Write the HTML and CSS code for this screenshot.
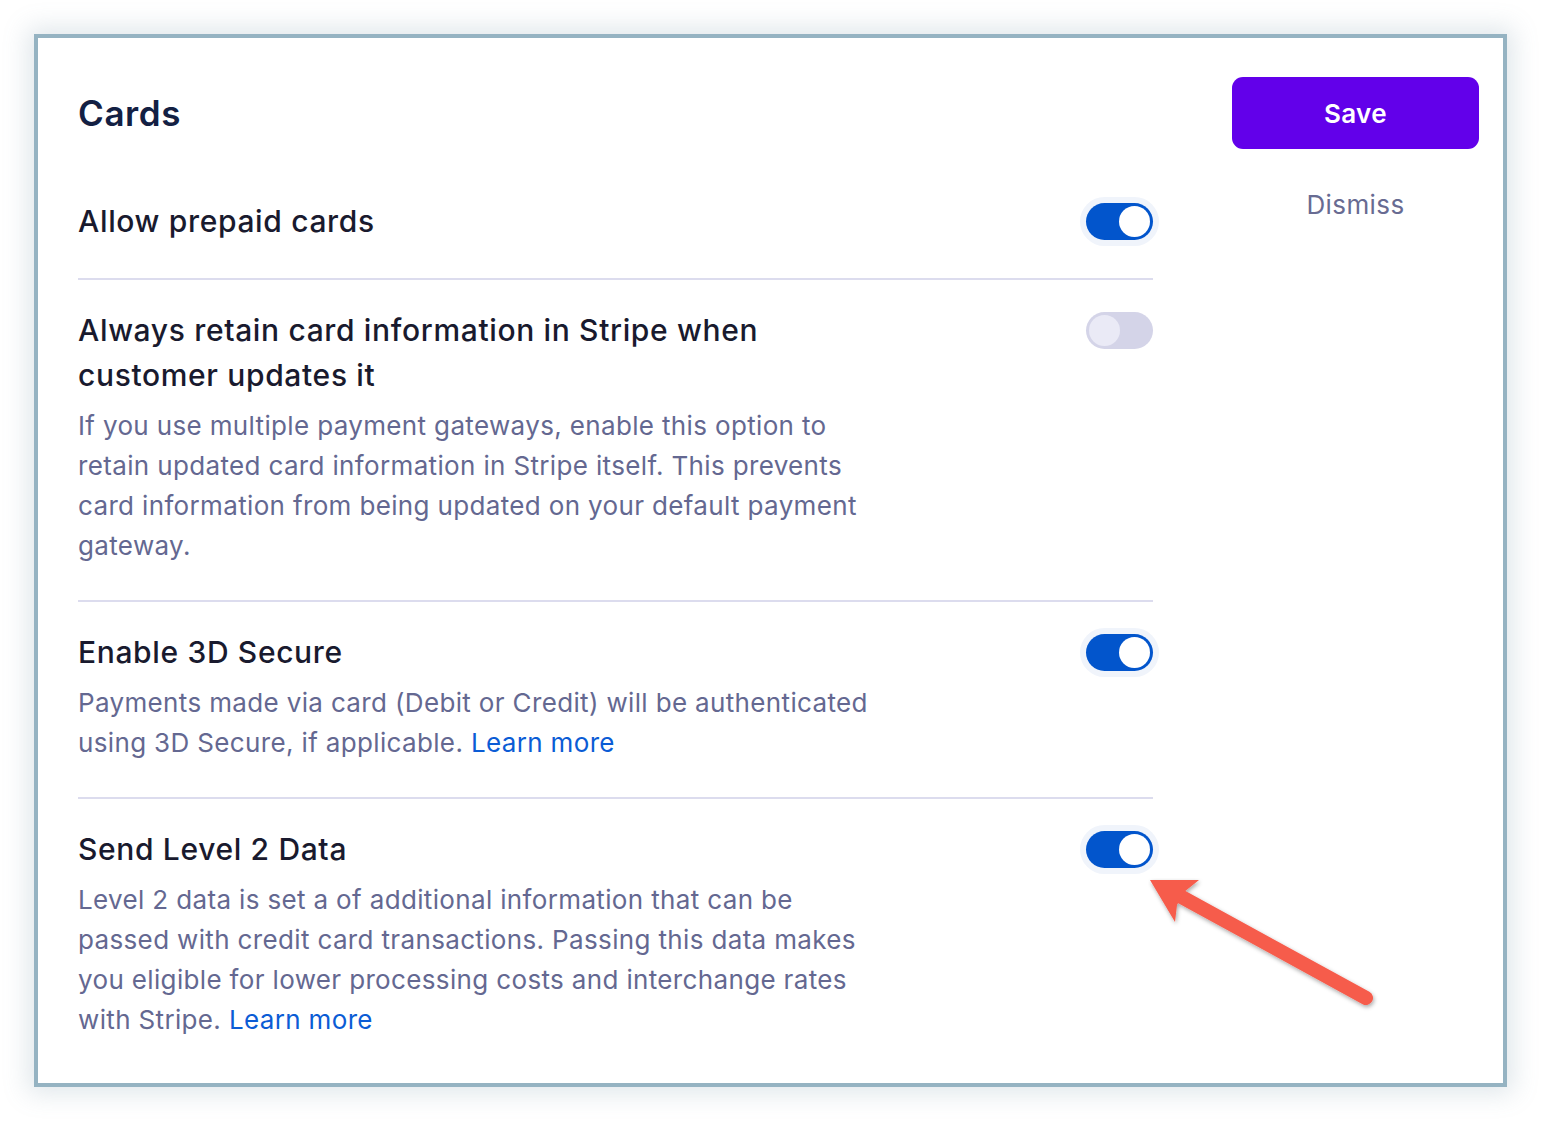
FILE: index.html
```html
<!DOCTYPE html>
<html lang="en">
<head>
<meta charset="utf-8">
<title>Cards settings</title>
<link rel="stylesheet" href="styles.css">
</head>
<body>
<div class="frame">
  <div class="main">
    <div class="header"><h1 class="title">Cards</h1></div>
    <div class="row first">
      <div class="text">
        <div class="label">Allow prepaid cards</div>
      </div>
      <span class="toggle on"><span class="knob"></span></span>
    </div>
    <div class="row">
      <div class="text">
        <div class="label">Always retain card information in Stripe when customer updates it</div>
        <p class="desc">If you use multiple payment gateways, enable this option to retain updated card information in Stripe itself. This prevents card information from being updated on your default payment gateway.</p>
      </div>
      <span class="toggle off"><span class="knob"></span></span>
    </div>
    <div class="row">
      <div class="text">
        <div class="label">Enable 3D Secure</div>
        <p class="desc">Payments made via card (Debit or Credit) will be authenticated using 3D Secure, if applicable. <a class="link" href="#">Learn more</a></p>
      </div>
      <span class="toggle on"><span class="knob"></span></span>
    </div>
    <div class="row last">
      <div class="text">
        <div class="label">Send Level 2 Data</div>
        <p class="desc">Level 2 data is set a of additional information that can be passed with credit card transactions. Passing this data makes you eligible for lower processing costs and interchange rates with Stripe. <a class="link" href="#">Learn more</a></p>
      </div>
      <span class="toggle on"><span class="knob"></span></span>
    </div>
  </div>
  <div class="side">
    <button class="save">Save</button>
    <a class="dismiss" href="#">Dismiss</a>
  </div>
  <svg class="arrow" width="260" height="160" viewBox="0 0 260 160">
    <defs>
      <filter id="sh" x="-20%" y="-20%" width="140%" height="140%">
        <feDropShadow dx="1" dy="2" stdDeviation="2" flood-color="#000" flood-opacity="0.35"/>
      </filter>
    </defs>
    <g filter="url(#sh)">
      <line x1="30" y1="17" x2="218" y2="120" stroke="#f65b4b" stroke-width="14" stroke-linecap="round"/>
      <polygon points="2,2 51,2 36,14 29,27 27,44" fill="#f65b4b"/>
    </g>
  </svg>
</div>
</body>
</html>
```
FILE: styles.css
```css
* { box-sizing: border-box; }
html, body { margin: 0; padding: 0; background: #ffffff; }
body {
  font-family: Inter, "Noto Sans", "Liberation Sans", sans-serif;
  padding: 34px 35px 34px 34px;
}
.frame {
  position: relative;
  display: flex;
  width: 1473px;
  height: 1053px;
  border: 4px solid #95b3c2;
  background: #fff;
  box-shadow: 0 0 24px 6px rgba(110, 140, 160, 0.22);
  padding: 39px 24px 0 40px;
}
.main { width: 1075px; }
.header { height: 72px; display: flex; align-items: center; }
.title {
  margin: 0 0 1px;
  font-size: 35px;
  font-weight: 600;
  color: #132043;
  letter-spacing: 0.6px;
}
.row {
  display: flex;
  justify-content: space-between;
  align-items: flex-start;
  padding: 28px 0 34px;
  border-bottom: 2px solid #dcdcee;
}
.row.first { margin-top: 22px; }
.row.last { border-bottom: none; }
.text { width: 800px; }
.label {
  font-size: 30px;
  line-height: 45px;
  font-weight: 500;
  color: #191a2e;
  letter-spacing: 0.65px;
}
.desc {
  margin: 8px 0 0;
  font-size: 26px;
  line-height: 40px;
  color: #646891;
  letter-spacing: 0.35px;
}
.link { color: #0b5cd5; text-decoration: none; }
.toggle {
  position: relative;
  display: block;
  flex-shrink: 0;
  width: 67px;
  height: 37px;
  margin-top: 4px;
  border-radius: 19px;
  box-shadow: 0 0 0 6px #f0f4fb;
}
.toggle.on { background: #0255cc; }
.toggle.off { background: #d4d4e8; box-shadow: none; }
.knob {
  position: absolute;
  top: 3px;
  width: 31px;
  height: 31px;
  border-radius: 50%;
}
.toggle.on .knob { right: 3px; background: #fff; }
.toggle.off .knob { left: 3px; background: #eaeaf6; }
.side {
  margin-left: 79px;
  width: 247px;
  display: flex;
  flex-direction: column;
  align-items: center;
}
.save {
  width: 247px;
  height: 72px;
  border: none;
  border-radius: 11px;
  background: #6200ea;
  color: #fff;
  font-family: inherit;
  font-size: 26px;
  font-weight: 600;
  letter-spacing: 0.3px;
  cursor: pointer;
}
.dismiss {
  margin-top: 40px;
  font-size: 26px;
  letter-spacing: 0.4px;
  color: #686b92;
  text-decoration: none;
}
.arrow {
  position: absolute;
  left: 1110px;
  top: 840px;
}
```
